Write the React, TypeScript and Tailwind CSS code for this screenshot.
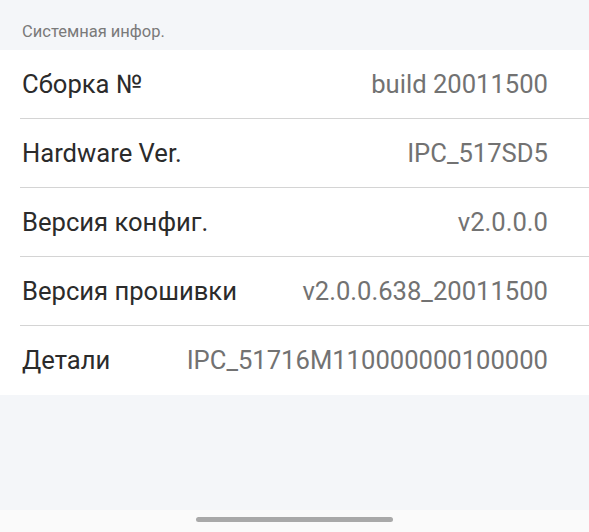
const rows = [
  { label: "Сборка №", value: "build 20011500" },
  { label: "Hardware Ver.", value: "IPC_517SD5" },
  { label: "Версия конфиг.", value: "v2.0.0.0" },
  { label: "Версия прошивки", value: "v2.0.0.638_20011500" },
  { label: "Детали", value: "IPC_51716M110000000100000" },
]

export default function App() {
  return (
    <div className="w-[589px] h-[532px] flex flex-col bg-[#f4f6f9] font-['Roboto',sans-serif] overflow-hidden">
      <div className="h-[50px] shrink-0 pl-[22px] pt-[22px] text-[16.5px] leading-[20px] text-[#7a7a7a]">
        Системная инфор.
      </div>

      <div className="bg-white">
        {rows.map((row, idx) => (
          <div key={idx} className="pl-[20px]">
            <div
              className={
                "h-[69px] flex items-center justify-between pl-[2px] pr-[41px] " +
                (idx < rows.length - 1 ? "border-b border-[#d4d4d4]" : "h-[68px]")
              }
            >
              <span className="text-[25.6px] text-[#2b2b2b] whitespace-nowrap">{row.label}</span>
              <span className="text-[25.6px] text-[#727272] whitespace-nowrap">{row.value}</span>
            </div>
          </div>
        ))}
      </div>

      <div className="flex-1" />

      <div className="h-[22px] shrink-0 bg-[#fafafa] flex justify-center">
        <div className="w-[197px] h-[5px] mt-[7px] rounded-full bg-[#a9a9a9]" />
      </div>
    </div>
  )
}
